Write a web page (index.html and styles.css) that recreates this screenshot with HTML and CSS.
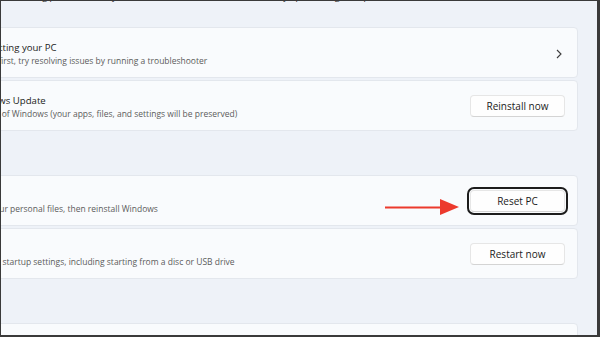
FILE: index.html
```html
<!DOCTYPE html>
<html lang="en">
<head>
    <meta charset="UTF-8">
    <title>Recovery</title>
    <link rel="stylesheet" href="styles.css">
</head>
<body>
    <div class="frame">
        <div class="page">
            <p class="intro">If you're having problems with your PC or want to reset it, these recovery options might help.</p>

            <!-- Без сброса -->
            <div class="group">
                <div class="card">
                    <div class="info">
                        <div class="title">Fix problems without resetting your PC</div>
                        <div class="desc">Resetting can take a while — first, try resolving issues by running a troubleshooter</div>
                    </div>
                    <svg class="chevron" width="6" height="10" viewBox="0 0 6 10">
                        <path d="M1 1 L5 5 L1 9" fill="none" stroke="#3c3c3c" stroke-width="1.1"/>
                    </svg>
                </div>
                <div class="card">
                    <div class="info">
                        <div class="title">Fix problems using Windows Update</div>
                        <div class="desc">Reinstall your current version of Windows (your apps, files, and settings will be preserved)</div>
                    </div>
                    <button class="btn">Reinstall now</button>
                </div>
            </div>

            <h2 class="section">Recovery options</h2>
            <div class="group">
                <div class="card">
                    <div class="info">
                        <div class="title">Reset this PC</div>
                        <div class="desc">Choose to keep or remove your personal files, then reinstall Windows</div>
                    </div>
                    <button class="btn focused">Reset PC</button>
                    <svg class="arrow" width="74" height="18" viewBox="0 0 74 18">
                        <line x1="0" y1="9.5" x2="58" y2="9.5" stroke="#ec3a2d" stroke-width="2"/>
                        <polygon points="55,1 74,9 55,17" fill="#ec3a2d"/>
                    </svg>
                </div>
                <div class="card">
                    <div class="info">
                        <div class="title">Advanced startup</div>
                        <div class="desc">Restart your device to change startup settings, including starting from a disc or USB drive</div>
                    </div>
                    <button class="btn">Restart now</button>
                </div>
            </div>

            <h2 class="section">Related support</h2>
            <div class="group">
                <div class="card">
                    <div class="info">
                        <div class="title">Help with Recovery</div>
                    </div>
                </div>
            </div>
        </div>
    </div>
</body>
</html>
```

FILE: styles.css
```css
* {
    box-sizing: border-box;
}

body {
    margin: 0;
    font-family: 'Open Sans', sans-serif;
    background-color: #3a3a3a;
}

.frame {
    width: 600px;
    height: 337px;
    border-style: solid;
    border-color: #3a3a3a;
    border-width: 1px 3px 2px 1px;
    background-color: #eef2f8;
    overflow: hidden;
}

.page {
    margin-left: -133px;
    margin-right: 19px;
}

.intro {
    font-size: 9px;
    line-height: 12px;
    color: #1b1b1b;
    margin: -10px 0 0 115px;
    height: 36px;
}

.group {
    display: flex;
    flex-direction: column;
    gap: 2px;
}

.card {
    position: relative;
    display: flex;
    align-items: center;
    justify-content: space-between;
    height: 51px;
    padding: 2px 12px 0 14px;
    background-color: #f9fbfd;
    border: 1px solid #e3e7ed;
    border-radius: 4px;
}

.title {
    font-size: 9.6px;
    line-height: 14px;
    color: #1b1b1b;
}

.desc {
    font-size: 8.5px;
    line-height: 12px;
    color: #5c5c5c;
}

.chevron {
    margin-right: 3px;
}

.btn {
    width: 95px;
    height: 22px;
    padding: 0;
    margin-top: -2px;
    font-family: inherit;
    font-size: 10px;
    color: #1b1b1b;
    background-color: #fefefe;
    border: 1px solid #e6e6e6;
    border-bottom-color: #d4d4d4;
    border-radius: 4px;
}

.btn.focused {
    outline: 2px solid #1c1c1c;
    outline-offset: 1px;
}

.arrow {
    position: absolute;
    right: 118px;
    top: 22px;
}

.section {
    height: 44px;
    margin: 0;
    padding-top: 18px;
    font-size: 10px;
    font-weight: 600;
    color: #1b1b1b;
}
```
